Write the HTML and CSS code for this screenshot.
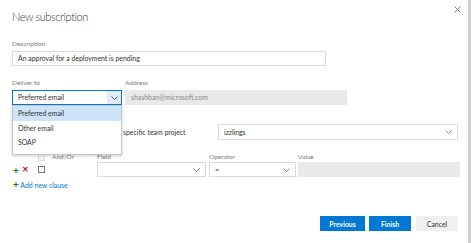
FILE: index.html
```html
<!DOCTYPE html>
<html lang="en">
<head>
  <meta charset="UTF-8" />
  <title>New subscription</title>
  <link rel="stylesheet" href="styles.css">
</head>
<body>
  <div class="dialog">
    <header class="dialog-header">
      <h1 class="dialog-title">New subscription</h1>
      <button class="close-button" aria-label="Close">
        <svg width="7" height="7" viewBox="0 0 7 7"><path d="M0.5 0.5 L6.5 6.5 M6.5 0.5 L0.5 6.5" stroke="#777" stroke-width="1"/></svg>
      </button>
    </header>

    <div class="field">
      <label class="field-label">Description</label>
      <div class="text-input desc-input">An approval for a deployment is pending</div>
    </div>

    <div class="deliver-row">
      <div class="field deliver-field">
        <label class="field-label">Deliver to</label>
        <div class="select select-active">
          <span>Preferred email</span>
          <span class="chevron-box">
            <svg width="7" height="4" viewBox="0 0 7 4"><path d="M0.5 0.5 L3.5 3.5 L6.5 0.5" fill="none" stroke="#555" stroke-width="0.9"/></svg>
          </span>
          <ul class="dropdown">
            <li class="dropdown-item selected">Preferred email</li>
            <li class="dropdown-item">Other email</li>
            <li class="dropdown-item">SOAP</li>
          </ul>
        </div>
      </div>
      <div class="field address-field">
        <label class="field-label">Address</label>
        <div class="text-input disabled-input">shashban@microsoft.com</div>
      </div>
    </div>

    <div class="filter-row">
      <span class="filter-label">specific team project</span>
      <div class="select project-select">
        <span>izzlings</span>
        <svg width="7" height="4" viewBox="0 0 7 4"><path d="M0.5 0.5 L3.5 3.5 L6.5 0.5" fill="none" stroke="#777" stroke-width="0.9"/></svg>
      </div>
    </div>

    <div class="clauses">
      <span></span>
      <span class="checkbox faint"></span>
      <span class="col-label">And/Or</span>
      <span class="col-label">Field</span>
      <span class="col-label">Operator</span>
      <span class="col-label">Value</span>

      <span class="clause-actions">
        <span class="plus">+</span><span class="cross">&#x2715;</span>
      </span>
      <span class="checkbox"></span>
      <span></span>
      <div class="select field-select">
        <span></span>
        <svg width="7" height="4" viewBox="0 0 7 4"><path d="M0.5 0.5 L3.5 3.5 L6.5 0.5" fill="none" stroke="#777" stroke-width="0.9"/></svg>
      </div>
      <div class="select operator-select">
        <span>=</span>
        <svg width="7" height="4" viewBox="0 0 7 4"><path d="M0.5 0.5 L3.5 3.5 L6.5 0.5" fill="none" stroke="#777" stroke-width="0.9"/></svg>
      </div>
      <div class="text-input disabled-input value-input"></div>
    </div>

    <div class="add-clause"><span class="plus">+</span> Add new clause</div>

    <footer class="dialog-footer">
      <button class="btn btn-primary btn-previous">Previous</button>
      <button class="btn btn-primary btn-finish">Finish</button>
      <button class="btn btn-secondary">Cancel</button>
    </footer>
  </div>
</body>
</html>
```

FILE: styles.css
```css
body, html {
  margin: 0;
  padding: 0;
  background-color: #ffffff;
  font-family: 'Lato', 'Noto Sans', sans-serif;
  color: #333333;
}

.dialog {
  width: 471px;
  height: 243px;
  box-sizing: border-box;
  padding: 0 10px 0 12px;
  border-right: 3px solid #d2d2d2;
  display: flex;
  flex-direction: column;
  font-size: 6.9px;
}

.dialog-header {
  display: flex;
  justify-content: space-between;
  align-items: flex-start;
  height: 38px;
}

.dialog-title {
  margin: 0;
  padding-top: 8px;
  font-size: 11px;
  font-weight: 300;
  letter-spacing: -0.4px;
  color: #333333;
  line-height: 18px;
}

.close-button {
  background: none;
  border: none;
  padding: 0;
  margin: 6px -3px 0 0;
  width: 7px;
  height: 7px;
  display: flex;
}

.field {
  display: flex;
  flex-direction: column;
}

.field-label {
  color: #7a7a7a;
  font-size: 6.5px;
  line-height: 11px;
  margin-bottom: 2px;
}

.text-input {
  height: 15px;
  box-sizing: border-box;
  border: 1px solid #dadada;
  padding: 0 5px;
  line-height: 13px;
  color: #333333;
}

.desc-input {
  width: 314px;
}

.disabled-input {
  background-color: #e9e9e9;
  border-color: #e9e9e9;
  color: #888888;
}

.deliver-row {
  display: flex;
  gap: 3px;
  margin-top: 11px;
}

.deliver-field {
  width: 110px;
}

.address-field {
  width: 222px;
}

.select {
  position: relative;
  height: 15px;
  box-sizing: border-box;
  border: 1px solid #dadada;
  padding: 0 5px;
  display: flex;
  justify-content: space-between;
  align-items: center;
  line-height: 13px;
}

.select-active {
  border-color: #0078d4;
  padding-right: 0;
}

.chevron-box {
  width: 14px;
  height: 13px;
  background-color: #e3edf7;
  display: flex;
  align-items: center;
  justify-content: center;
}

.dropdown {
  position: absolute;
  top: 14px;
  left: -1px;
  width: 110px;
  margin: 0;
  padding: 0 0 4px 0;
  list-style: none;
  background-color: #ffffff;
  border: 1px solid #c6c6c6;
  box-sizing: border-box;
  box-shadow: 0 1px 3px rgba(0, 0, 0, 0.2);
  z-index: 2;
}

.dropdown-item {
  height: 14.5px;
  line-height: 14.5px;
  padding: 0 5px;
  color: #333333;
}

.dropdown-item.selected {
  background-color: #cde4f7;
}

.filter-row {
  display: flex;
  align-items: center;
  justify-content: space-between;
  margin-top: 19px;
}

.filter-label {
  color: #333333;
  padding-left: 111px;
}

.project-select {
  width: 240px;
  height: 16px;
}

.clauses {
  display: grid;
  grid-template-columns: 25px 15px 45px 112px 89px 162px;
  align-items: center;
  margin-top: 12px;
}

.col-label {
  color: #7a7a7a;
  font-size: 6.5px;
  line-height: 10px;
}

.field-select {
  width: 109px;
}

.operator-select {
  width: 87px;
}

.value-input {
  width: 162px;
}

.checkbox {
  width: 7px;
  height: 7px;
  border: 1px solid #777777;
  box-sizing: border-box;
  margin-left: 1px;
}

.checkbox.faint {
  border-color: #dddddd;
  background-color: #f4f4f4;
}

.clause-actions {
  display: flex;
  align-items: center;
  gap: 3px;
  padding-left: 1px;
}

.plus {
  color: #107c10;
  font-size: 10px;
  font-weight: bold;
  line-height: 10px;
}

.cross {
  color: #c50f1f;
  font-size: 7.5px;
  font-weight: bold;
}

.add-clause {
  margin-top: 2px;
  color: #0078d4;
  line-height: 12px;
  padding-left: 1px;
}

.dialog-footer {
  display: flex;
  justify-content: flex-end;
  gap: 4px;
  margin-top: 25px;
}

.btn {
  height: 15px;
  border: none;
  padding: 0;
  font-family: inherit;
  font-size: 6.9px;
  cursor: pointer;
}

.btn-primary {
  background-color: #0078d4;
  color: #ffffff;
  font-weight: 700;
}

.btn-previous {
  width: 45px;
}

.btn-finish {
  width: 42px;
}

.btn-secondary {
  width: 42px;
  margin-left: 1px;
  background-color: #f0f0f0;
  color: #333333;
}
```
